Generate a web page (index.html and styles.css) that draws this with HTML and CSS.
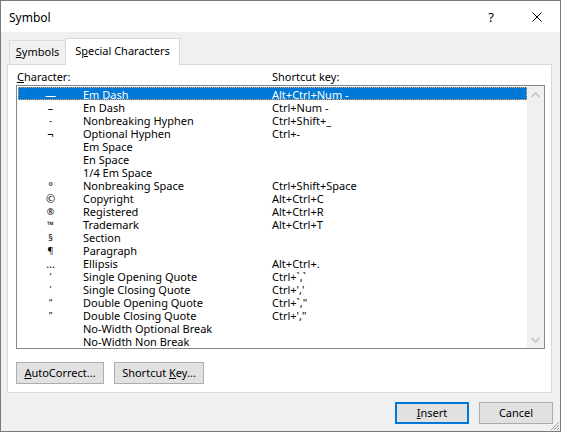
FILE: index.html
```html
<!DOCTYPE html>
<html lang="en">
<head>
<meta charset="utf-8">
<title>Symbol</title>
<link rel="stylesheet" href="styles.css">
</head>
<body>
<div class="window">
  <header class="titlebar">
    <span class="title">Symbol</span>
    <div class="caption-buttons">
      <span class="cap-btn help">?</span>
      <span class="cap-btn close">
        <svg width="10" height="10" viewBox="0 0 10 10"><path d="M0.5 0.5 L9.5 9.5 M9.5 0.5 L0.5 9.5" stroke="#000" stroke-width="1" fill="none"/></svg>
      </span>
    </div>
  </header>

  <main class="client">
    <nav class="tabs">
      <div class="tab"><u>S</u>ymbols</div>
      <div class="tab active">S<u>p</u>ecial Characters</div>
    </nav>

    <section class="panel">
      <div class="list-head">
        <span><u>C</u>haracter:</span>
        <span>Shortcut key:</span>
      </div>

      <div class="listbox">
        <div class="rows">
          <div class="row selected"><span class="ch">—</span><span>Em Dash</span><span>Alt+Ctrl+Num -</span></div>
          <div class="row"><span class="ch">–</span><span>En Dash</span><span>Ctrl+Num -</span></div>
          <div class="row"><span class="ch small">-</span><span>Nonbreaking Hyphen</span><span>Ctrl+Shift+_</span></div>
          <div class="row"><span class="ch">¬</span><span>Optional Hyphen</span><span>Ctrl+-</span></div>
          <div class="row"><span class="ch"></span><span>Em Space</span><span></span></div>
          <div class="row"><span class="ch"></span><span>En Space</span><span></span></div>
          <div class="row"><span class="ch"></span><span>1/4 Em Space</span><span></span></div>
          <div class="row"><span class="ch">°</span><span>Nonbreaking Space</span><span>Ctrl+Shift+Space</span></div>
          <div class="row"><span class="ch">©</span><span>Copyright</span><span>Alt+Ctrl+C</span></div>
          <div class="row"><span class="ch small">®</span><span>Registered</span><span>Alt+Ctrl+R</span></div>
          <div class="row"><span class="ch small">™</span><span>Trademark</span><span>Alt+Ctrl+T</span></div>
          <div class="row"><span class="ch small">§</span><span>Section</span><span></span></div>
          <div class="row"><span class="ch small">¶</span><span>Paragraph</span><span></span></div>
          <div class="row"><span class="ch">…</span><span>Ellipsis</span><span>Alt+Ctrl+.</span></div>
          <div class="row"><span class="ch small">‘</span><span>Single Opening Quote</span><span>Ctrl+`,`</span></div>
          <div class="row"><span class="ch small">’</span><span>Single Closing Quote</span><span>Ctrl+','</span></div>
          <div class="row"><span class="ch small">“</span><span>Double Opening Quote</span><span>Ctrl+`,"</span></div>
          <div class="row"><span class="ch small">”</span><span>Double Closing Quote</span><span>Ctrl+',"</span></div>
          <div class="row"><span class="ch"></span><span>No-Width Optional Break</span><span></span></div>
          <div class="row"><span class="ch"></span><span>No-Width Non Break</span><span></span></div>
        </div>
        <div class="vscroll">
          <span class="arrow"><svg width="9" height="6" viewBox="0 0 9 6"><path d="M0.5 5 L4.5 1 L8.5 5" stroke="#bfbfbf" stroke-width="1.4" fill="none"/></svg></span>
          <span class="arrow"><svg width="9" height="6" viewBox="0 0 9 6"><path d="M0.5 1 L4.5 5 L8.5 1" stroke="#bfbfbf" stroke-width="1.4" fill="none"/></svg></span>
        </div>
      </div>

      <div class="panel-buttons">
        <button class="btn autocorrect"><u>A</u>utoCorrect...</button>
        <button class="btn shortcut">Shortcut <u>K</u>ey...</button>
      </div>
    </section>

    <footer class="dialog-buttons">
      <button class="btn dlg default"><u>I</u>nsert</button>
      <button class="btn dlg">Cancel</button>
    </footer>
  </main>

  <svg class="grip" width="12" height="12" viewBox="0 0 12 12">
    <path d="M11 3 L3 11 M11 6 L6 11 M11 9 L9 11" stroke="#9a9a9a" stroke-width="1" fill="none"/>
  </svg>
</div>
</body>
</html>
```

FILE: styles.css
```css
* {
  box-sizing: border-box;
}

html, body {
  margin: 0;
  padding: 0;
  background: #f0f0f0;
}

body {
  font-family: "Noto Sans", "Open Sans", sans-serif;
  font-size: 11px;
  color: #000;
}

u {
  text-decoration: underline;
  text-underline-offset: 1px;
}

.window {
  position: relative;
  width: 561px;
  height: 432px;
  border: 1px solid #7a7a7a;
  display: flex;
  flex-direction: column;
  background: #f0f0f0;
}

/* caption bar */
.titlebar {
  height: 31px;
  flex: none;
  background: #fff;
  display: flex;
  align-items: center;
  justify-content: space-between;
  padding-left: 8px;
}

.title {
  font-size: 12px;
  line-height: 15px;
  margin-top: 1px;
}

.caption-buttons {
  display: flex;
  height: 100%;
}

.cap-btn {
  width: 46px;
  height: 100%;
  display: flex;
  align-items: center;
  justify-content: center;
}

.help {
  font-size: 13px;
  padding-top: 1px;
}

.close svg {
  display: block;
  margin-top: 1px;
}

/* dialog body */
.client {
  flex: 1;
  display: flex;
  flex-direction: column;
  padding: 6px 7px 7px 6px;
}

.tabs {
  display: flex;
  align-items: flex-end;
  height: 26px;
  padding-left: 2px;
  position: relative;
  z-index: 1;
}

.tab {
  height: 24px;
  width: 56px;
  text-align: center;
  padding-top: 3px;
  line-height: 15px;
  border: 1px solid #d9d9d9;
  border-right: none;
  border-bottom: none;
  background: #f0f0f0;
}

.tab.active {
  height: 27px;
  width: 115px;
  margin-bottom: -1px;
  padding-top: 4px;
  border-right: 1px solid #d9d9d9;
  background: #fff;
}

.panel {
  width: 545px;
  height: 329px;
  flex: none;
  background: #fff;
  border: 1px solid #d9d9d9;
  padding: 3px 6px 8px 8px;
  display: flex;
  flex-direction: column;
}

.list-head {
  display: grid;
  grid-template-columns: 255px 1fr;
  padding-left: 1px;
  padding-top: 1px;
  line-height: 15px;
  height: 15px;
  margin-bottom: 2px;
}

.listbox {
  height: 264px;
  border: 1px solid #828790;
  display: flex;
  padding: 0 0 0 1px;
}

.rows {
  flex: 1;
  padding: 1px 0;
}

.row {
  display: grid;
  grid-template-columns: 65px 189px 1fr;
  height: 13px;
  line-height: 13px;
  padding-top: 1px;
  white-space: nowrap;
}

.row.selected {
  background: #0078d7;
  color: #fff;
  outline: 1px dotted #f0a050;
  outline-offset: -1px;
}

.ch {
  text-align: center;
}

.ch.small {
  font-size: 9px;
}

.vscroll {
  width: 17px;
  background: #f0f0f0;
  display: flex;
  flex-direction: column;
  justify-content: space-between;
}

.arrow {
  height: 17px;
  display: flex;
  align-items: center;
  justify-content: center;
}

.arrow svg {
  display: block;
}

.panel-buttons {
  display: flex;
  gap: 10px;
  margin-top: 13px;
}

.btn {
  font: inherit;
  color: #000;
  height: 22px;
  padding: 0;
  background: #e1e1e1;
  border: 1px solid #adadad;
  line-height: 18px;
  text-align: center;
}

.autocorrect {
  width: 88px;
}

.shortcut {
  width: 90px;
}

.dialog-buttons {
  display: flex;
  justify-content: flex-end;
  gap: 10px;
  margin-top: 9px;
}

.dlg {
  width: 74px;
}

.dlg.default {
  border: 2px solid #0078d7;
  line-height: 16px;
}

.grip {
  position: absolute;
  right: 0;
  bottom: 0;
}
```
